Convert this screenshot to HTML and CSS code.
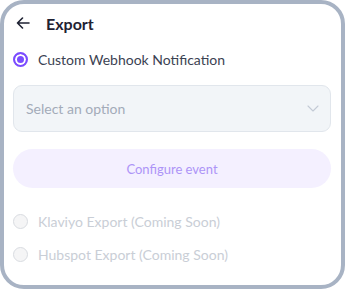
FILE: index.html
```html
<!DOCTYPE html>
<html>
<head>
<meta charset="utf-8">
<link rel="stylesheet" href="styles.css">
</head>
<body>
<div class="card">
  <div class="header">
    <svg class="back" width="14" height="12" viewBox="0 0 14 12"><path d="M13 6H1.5M6.5 1 1.5 6l5 5" fill="none" stroke="#1f2233" stroke-width="1.6" stroke-linecap="round" stroke-linejoin="round"/></svg>
    <span class="title">Export</span>
  </div>
  <label class="option">
    <span class="radio checked"></span>
    <span class="label">Custom Webhook Notification</span>
  </label>
  <div class="select">
    <span class="placeholder">Select an option</span>
    <svg width="12" height="7" viewBox="0 0 12 7"><path d="M1 1l5 5 5-5" fill="none" stroke="#c3cad5" stroke-width="1.1" stroke-linecap="round" stroke-linejoin="round"/></svg>
  </div>
  <button class="configure">Configure event</button>
  <div class="disabled-list">
    <label class="option disabled">
      <span class="radio"></span>
      <span class="label">Klaviyo Export (Coming Soon)</span>
    </label>
    <label class="option disabled">
      <span class="radio"></span>
      <span class="label">Hubspot Export (Coming Soon)</span>
    </label>
  </div>
</div>
</body>
</html>
```
FILE: styles.css
```css
* { box-sizing: border-box; }
html, body { margin: 0; padding: 0; background: #fff; }
body { width: 345px; height: 289px; font-family: "Lato", "Noto Sans", sans-serif; }
.card {
  width: 345px; height: 289px;
  border: 4px solid #a8b3c4;
  border-radius: 24px;
  padding: 9px 10px 0 9px;
  display: flex; flex-direction: column;
}
.header { display: flex; align-items: center; height: 20px; padding-left: 3px; }
.back { margin-right: 16px; }
.title { font-size: 16px; font-weight: 700; color: #1f2233; }
.option { display: flex; align-items: center; gap: 10px; height: 22px; }
.card > .option { margin-top: 15px; }
.radio {
  width: 15px; height: 15px; border-radius: 50%;
  border: 1px solid #d9dce1; background: #f5f5f6;
  flex: none;
}
.radio.checked {
  border: 2px solid #7b4cff; background: #7b4cff;
  box-shadow: inset 0 0 0 2px #fff;
}
.label { font-size: 14px; color: #3b4252; }
.select {
  margin-top: 15px; height: 47px; flex: none;
  background: #f2f5f8; border: 1px solid #e1e6ec; border-radius: 9px;
  display: flex; align-items: center; justify-content: space-between;
  padding: 0 11px 0 12px;
}
.placeholder { font-size: 14px; color: #a3abb8; }
.configure {
  margin-top: 17px; height: 39px; width: 100%; flex: none;
  border: none; border-radius: 20px; background: #f4f0ff;
  color: #ad94f7; font-family: inherit; font-size: 13px;
}
.disabled-list { margin-top: 22px; display: flex; flex-direction: column; gap: 11px; }
.disabled .label { color: #c9ced6; font-size: 14px; }
```
